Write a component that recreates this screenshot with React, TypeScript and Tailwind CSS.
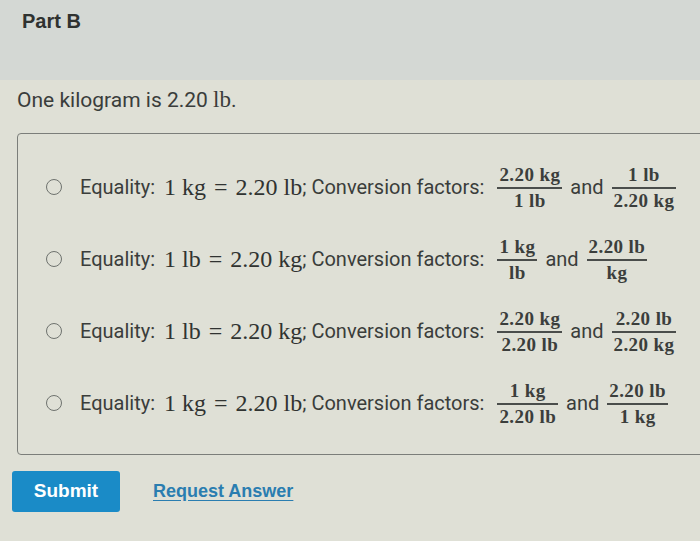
import React from 'react';

type Opt = {
  eq: [string, string];
  f1: [string, string];
  f2: [string, string];
};

const options: Opt[] = [
  { eq: ['1 kg', '2.20 lb'], f1: ['2.20 kg', '1 lb'], f2: ['1 lb', '2.20 kg'] },
  { eq: ['1 lb', '2.20 kg'], f1: ['1 kg', 'lb'], f2: ['2.20 lb', 'kg'] },
  { eq: ['1 lb', '2.20 kg'], f1: ['2.20 kg', '2.20 lb'], f2: ['2.20 lb', '2.20 kg'] },
  { eq: ['1 kg', '2.20 lb'], f1: ['1 kg', '2.20 lb'], f2: ['2.20 lb', '1 kg'] },
];

function Frac({ top, bottom, first }: { top: string; bottom: string; first?: boolean }) {
  return (
    <span
      className={
        "inline-flex flex-col items-center font-['Liberation_Serif',serif] font-bold text-[19px] tracking-[0.4px] leading-[21px] text-[#3b3e3c] mr-[8px] " +
        (first ? 'ml-[13px]' : 'ml-[8px]')
      }
    >
      <span className="px-[2px] pb-[2px]">{top}</span>
      <span className="self-stretch h-[2px] bg-[#4a4d4b]" />
      <span className="px-[2px] pt-[1px]">{bottom}</span>
    </span>
  );
}

function Radio() {
  return (
    <span className="w-[16px] h-[16px] rounded-full border-[1.5px] border-[#6e726e] shrink-0" />
  );
}

export default function App() {
  return (
    <div className="w-[700px] h-[541px] overflow-hidden bg-[#dfe0d6] font-['Roboto',sans-serif] text-[#3a3d3b]">
      {/* Header */}
      <div className="h-[80px] bg-[#d4d8d4] px-[22px] pt-[6px]">
        <h1 className="font-['Liberation_Sans',sans-serif] font-bold text-[20px] text-[#2f3230]">Part B</h1>
      </div>

      <p className="px-[17px] pt-[7px] text-[21px] leading-[26px]">
        One kilogram is 2.20{' '}
        <span className="font-['Liberation_Serif',serif] text-[23px]">lb</span>.
      </p>

      {/* Options box */}
      <div className="ml-[17px] mt-[20px] w-[720px] h-[322px] border-[1.5px] border-[#7b7e7a] rounded-[4px] pt-[17px] pb-[16px]">
        {options.map((o, i) => (
          <div key={i} className="h-[72px] flex items-center pl-[28px]">
            <Radio />
            <span className="ml-[18px] text-[20px]">Equality:</span>
            <span className="ml-[9px] font-['Liberation_Serif',serif] text-[24px] text-[#303331]">
              {o.eq[0]}
              <span className="mx-[8px]">=</span>
              {o.eq[1]}
            </span>
            <span className="text-[20px]">; Conversion factors:</span>
            <Frac top={o.f1[0]} bottom={o.f1[1]} first />
            <span className="text-[20px]">and</span>
            <Frac top={o.f2[0]} bottom={o.f2[1]} />
          </div>
        ))}
      </div>

      {/* Actions */}
      <div className="flex items-center pl-[12px] mt-[16px]">
        <button className="w-[108px] h-[41px] rounded-[3px] bg-[#1a8bc7] text-white font-['Liberation_Sans',sans-serif] font-bold text-[19px]">
          Submit
        </button>
        <a className="ml-[33px] text-[#2a7db0] font-['Liberation_Sans',sans-serif] font-bold text-[18px] underline underline-offset-[3px]">
          Request Answer
        </a>
      </div>
    </div>
  );
}
